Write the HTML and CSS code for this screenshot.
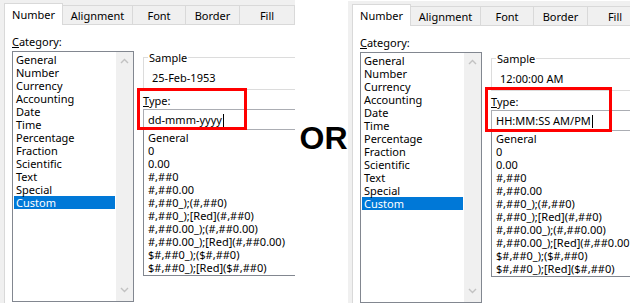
FILE: index.html
```html
<!DOCTYPE html>
<html>
<head>
<meta charset="utf-8">
<link rel="stylesheet" href="styles.css">
</head>
<body>
<div class="panel panel-a">
  <div class="tabs">
    <div class="tab active t-number">Number</div>
    <div class="tab t-align">Alignment</div>
    <div class="tab t-font">Font</div>
    <div class="tab t-border">Border</div>
    <div class="tab t-fill">Fill</div>
  </div>
  <div class="page">
    <div class="cat-col">
      <div class="label"><u>C</u>ategory:</div>
      <div class="catbox">
        <ul class="catlist">
          <li>General</li><li>Number</li><li>Currency</li><li>Accounting</li><li>Date</li><li>Time</li><li>Percentage</li><li>Fraction</li><li>Scientific</li><li>Text</li><li>Special</li><li class="sel">Custom</li>
        </ul>
        <div class="scrollbar">
          <svg class="arrow" width="9" height="6" viewBox="0 0 9 6"><path d="M1 5 L4.5 1.5 L8 5" fill="none" stroke="#c2c2c2" stroke-width="1.4"/></svg>
          <svg class="arrow" width="9" height="6" viewBox="0 0 9 6"><path d="M1 1 L4.5 4.5 L8 1" fill="none" stroke="#c2c2c2" stroke-width="1.4"/></svg>
        </div>
      </div>
    </div>
    <div class="right-col">
      <fieldset class="sample"><legend>Sample</legend><div class="sample-val">25-Feb-1953</div></fieldset>
      <div class="label type-label"><u>T</u>ype:</div>
      <div class="typebox">dd-mmm-yyyy<span class="caret"></span></div>
      <ul class="typelist">
        <li>General</li><li>0</li><li>0.00</li><li>#,##0</li><li>#,##0.00</li><li>#,##0_);(#,##0)</li><li>#,##0_);[Red](#,##0)</li><li>#,##0.00_);(#,##0.00)</li><li>#,##0.00_);[Red](#,##0.00)</li><li>$#,##0_);($#,##0)</li><li>$#,##0_);[Red]($#,##0)</li>
      </ul>
    </div>
  </div>
  <div class="redbox redbox-a"></div>
</div>
<div class="or">OR</div>
<div class="panel panel-b">
  <div class="tabs">
    <div class="tab active t-number">Number</div>
    <div class="tab t-align">Alignment</div>
    <div class="tab t-font">Font</div>
    <div class="tab t-border">Border</div>
    <div class="tab t-fill">Fill</div>
  </div>
  <div class="page">
    <div class="cat-col">
      <div class="label"><u>C</u>ategory:</div>
      <div class="catbox">
        <ul class="catlist">
          <li>General</li><li>Number</li><li>Currency</li><li>Accounting</li><li>Date</li><li>Time</li><li>Percentage</li><li>Fraction</li><li>Scientific</li><li>Text</li><li>Special</li><li class="sel">Custom</li>
        </ul>
        <div class="scrollbar">
          <svg class="arrow" width="9" height="6" viewBox="0 0 9 6"><path d="M1 5 L4.5 1.5 L8 5" fill="none" stroke="#c2c2c2" stroke-width="1.4"/></svg>
          <svg class="arrow" width="9" height="6" viewBox="0 0 9 6"><path d="M1 1 L4.5 4.5 L8 1" fill="none" stroke="#c2c2c2" stroke-width="1.4"/></svg>
        </div>
      </div>
    </div>
    <div class="right-col">
      <fieldset class="sample"><legend>Sample</legend><div class="sample-val">12:00:00 AM</div></fieldset>
      <div class="label type-label"><u>T</u>ype:</div>
      <div class="typebox">HH:MM:SS AM/PM<span class="caret"></span></div>
      <ul class="typelist">
        <li>General</li><li>0</li><li>0.00</li><li>#,##0</li><li>#,##0.00</li><li>#,##0_);(#,##0)</li><li>#,##0_);[Red](#,##0)</li><li>#,##0.00_);(#,##0.00)</li><li>#,##0.00_);[Red](#,##0.00)</li><li>$#,##0_);($#,##0)</li><li>$#,##0_);[Red]($#,##0)</li>
      </ul>
    </div>
  </div>
  <div class="redbox redbox-b"></div>
</div>
</body>
</html>
```

FILE: styles.css
```css
* { box-sizing: border-box; }
html, body { margin: 0; padding: 0; }
body {
  width: 630px;
  height: 303px;
  overflow: hidden;
  background: #ffffff;
  display: flex;
  align-items: flex-start;
  font-family: "Noto Sans", "Open Sans", sans-serif;
  font-size: 11px;
  line-height: 13px;
  color: #000000;
}
ul { list-style: none; margin: 0; padding: 0; }

.panel {
  position: relative;
  height: 303px;
  overflow: hidden;
  background: #f0f0f0;
  padding-left: 4px;
  flex: none;
}
.panel-a { width: 295px; }
.panel-b { width: 282px; margin-top: 1px; }

.tabs {
  display: flex;
  align-items: flex-end;
  height: 24px;
  width: 400px;
}
.tab {
  flex: none;
  height: 19px;
  border-top: 1px solid #d9d9d9;
  border-right: 1px solid #d9d9d9;
  background: #f0f0f0;
  text-align: center;
  padding-top: 3px;
}
.tab.active {
  position: relative;
  z-index: 2;
  height: 22px;
  margin-bottom: -1px;
  background: #ffffff;
  border-left: 1px solid #d9d9d9;
  padding-top: 4px;
}
.t-number { width: 59px; }
.t-align { width: 70px; }
.t-font { width: 53px; }
.t-border { width: 54px; }
.t-fill { width: 55px; }

.page {
  width: 420px;
  height: 290px;
  background: #ffffff;
  border-top: 1px solid #d9d9d9;
  border-left: 1px solid #d9d9d9;
  display: flex;
  align-items: flex-start;
  padding: 10px 0 0 7px;
}

.label u { text-decoration: underline; text-underline-offset: 1px; }

.catbox {
  margin-top: 3px;
  width: 122px;
  height: 251px;
  border: 1px solid #828790;
  display: flex;
}
.catlist {
  width: 103px;
  padding-top: 1px;
}
.catlist li {
  margin: 0 1px;
  padding-left: 2px;
  height: 13px;
  white-space: nowrap;
}
.catlist li.sel {
  background: #0078d7;
  color: #ffffff;
}
.scrollbar {
  width: 17px;
  background: #f0f0f0;
  display: flex;
  flex-direction: column;
  justify-content: space-between;
  align-items: center;
  padding: 6px 0 8px;
}
.arrow { display: block; }

.right-col {
  margin-left: 9px;
  margin-top: 16px;
  width: 260px;
  display: flex;
  flex-direction: column;
}
.sample {
  margin: 0;
  padding: 0 0 5px 4px;
  border: 1px solid #dcdcdc;
  border-right: none;
  min-width: 0;
}
.sample legend {
  padding: 0 1px;
  line-height: 13px;
}
.sample-val {
  padding: 7px 0 0 4px;
  height: 20px;
}
.type-label { margin-top: 4px; }
.typebox {
  margin-top: 2px;
  height: 21px;
  border: 1px solid #abadb3;
  border-right: none;
  padding: 3px 0 0 4px;
  white-space: nowrap;
}
.caret {
  display: inline-block;
  width: 1px;
  height: 13px;
  background: #000000;
  vertical-align: -3px;
  margin-left: 1px;
}
.typelist {
  height: 146px;
  border-left: 1px solid #828790;
  border-bottom: 1px solid #828790;
  padding: 1px 0 0 4px;
}
.typelist li { height: 13px; white-space: nowrap; }

.redbox {
  position: absolute;
  border: 3px solid #ff0000;
  z-index: 5;
}
.redbox-a { left: 137px; top: 88px; width: 110px; height: 42px; }
.redbox-b { left: 137px; top: 86px; width: 127px; height: 45px; }

.or {
  flex: none;
  width: 53px;
  padding: 122px 0 0 4px;
  text-align: center;
  font-family: "Liberation Sans", Arial, sans-serif;
  font-weight: bold;
  font-size: 32px;
  line-height: 32px;
}
```
